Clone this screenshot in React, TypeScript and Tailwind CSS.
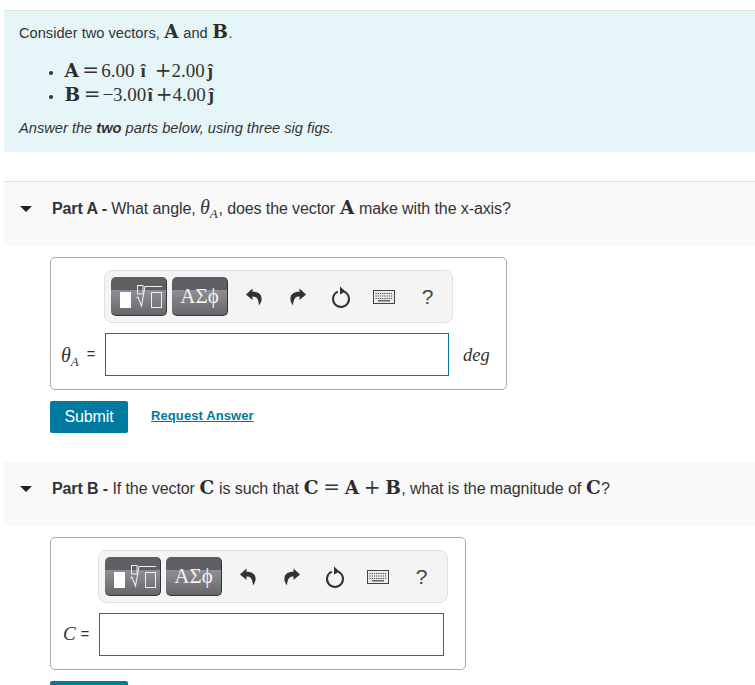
import type { ReactNode } from 'react';

const serif = "font-['Liberation_Serif',serif]";
const dejavu = "font-['DejaVu_Serif',serif]";

const Bold = ({ children }: { children: ReactNode }) => (
  <span className={`${dejavu} font-bold text-[18.500px] leading-none mx-[0.5px] text-[#2d2d2d]`}>{children}</span>
);

const Op = ({ children, className = '' }: { children: ReactNode; className?: string }) => (
  <span className={`${dejavu} text-[20px] leading-none ${className}`}>{children}</span>
);

const Theta = () => (
  <span className={`${serif} italic text-[20px] leading-none whitespace-nowrap`}>
    θ<sub className="text-[13px] leading-none bottom-[-4px] mr-[1px]">A</sub>
  </span>
);

const Caret = () => (
  <svg width="12" height="6" viewBox="0 0 12 6" className="shrink-0">
    <path d="M0 0h12L6 6z" fill="#222" />
  </svg>
);

const UndoIcon = () => (
  <svg width="16" height="18" viewBox="0 0 16 18">
    <path d="M6.500.5 0 6.500 6.500 12V8.500C10 8.500 12.500 10 13 17.500 15 15 16 12 15.500 9.500 14.800 5.500 11 3.800 6.500 3.800z" fill="#333" />
  </svg>
);

const RedoIcon = () => (
  <svg width="16" height="18" viewBox="0 0 16 18" className="-scale-x-100">
    <path d="M6.500.5 0 6.500 6.500 12V8.500C10 8.500 12.500 10 13 17.500 15 15 16 12 15.500 9.500 14.800 5.500 11 3.800 6.500 3.800z" fill="#333" />
  </svg>
);

const ReloadIcon = () => (
  <svg width="20" height="22" viewBox="0 0 20 22" fill="none">
    <path d="M6.800 5.600a8 8 0 1 0 6.400 0" stroke="#333" strokeWidth="2" />
    <path d="M9 .5l5.500 5L9 8.500z" fill="#333" />
  </svg>
);

const KeyboardIcon = () => (
  <svg width="22" height="14" viewBox="0 0 22 14">
    <rect x="0.500" y="0.500" width="21" height="13" fill="#ececec" stroke="#444" />
    <path d="M2.500 3.500h17M2.500 6h17M2.500 8.500h17" stroke="#444" strokeDasharray="1.200 1" />
    <path d="M5 10.800h12" stroke="#444" strokeWidth="1.200" />
  </svg>
);

const ToolButton = ({ children }: { children: ReactNode }) => (
  <div className="w-[56px] h-[39px] rounded-[5px] border-b border-r border-[#333] bg-[linear-gradient(#5f5f63_0,#5f5f63_35%,#8e8e94_35%,#66666a_100%)] flex items-center justify-center shrink-0 overflow-hidden">
    {children}
  </div>
);

const Toolbar = ({ className }: { className: string }) => (
  <div className={`h-[53px] bg-[#f4f4f4] border border-[#e2e2e2] rounded-lg flex items-center pl-[6px] ${className}`}>
    <div className="flex gap-[5px]">
      <ToolButton>
        <svg width="56" height="39" viewBox="0 0 56 39" fill="none" className="shrink-0">
          <rect x="9" y="15" width="11" height="16" fill="#fff" />
          <rect x="26.500" y="8.500" width="5.500" height="8.500" stroke="#eee" />
          <path d="M25.500 21l1.500-1 3.500 9L34 9.500h17" stroke="#eee" strokeWidth="1.100" />
          <rect x="40.500" y="15.500" width="10" height="15" stroke="#eee" />
        </svg>
      </ToolButton>
      <ToolButton>
        <span className={`${serif} text-[#f2f2f2] text-[21px] leading-none`}>ΑΣϕ</span>
      </ToolButton>
    </div>
    <div className="flex items-center ml-[4px]">
      <div className="w-[44px] flex justify-center"><UndoIcon /></div>
      <div className="w-[43px] flex justify-center"><RedoIcon /></div>
      <div className="w-[44px] flex justify-center"><ReloadIcon /></div>
      <div className="w-[42px] flex justify-center"><KeyboardIcon /></div>
      <div className="w-[45px] flex justify-center text-[21px] leading-none text-[#444]">?</div>
    </div>
  </div>
);

const PartHeader = ({ children, border, className }: { children: ReactNode; border?: boolean; className: string }) => (
  <div className={`bg-[#f9f9f9] flex items-start pl-[16px] ${border ? 'border-t border-[#e0e0e0]' : ''} ${className}`}>
    <div className="w-[32px] pt-[24px]"><Caret /></div>
    <p className="text-[16px] leading-[24px] pt-[15px] tracking-[-0.1px] whitespace-nowrap">{children}</p>
  </div>
);

export default function App() {
  return (
    <div className="h-[685px] overflow-hidden bg-white pl-[4px] pt-[10px] text-[#333] font-['Liberation_Sans',Arial,sans-serif]">
      {/* intro */}
      <section className="h-[142px] bg-[#e6f6f8] border-t border-[#e0e0e0] pl-[15px] pt-[10px] text-[14.650px]">
        <p className="leading-[24px]">
          Consider two vectors, <Bold>A</Bold> and <Bold>B</Bold>.
        </p>
        <ul className={`${serif} mt-[14px] ml-[29px] list-disc marker:text-[14px] text-[19px] leading-[24px]`}>
          <li className="ml-[16px] h-[24px] whitespace-nowrap">
            <Bold>A</Bold>
            <Op className="ml-[3px]">=</Op>
            <span className="ml-[2px]">6.00</span>
            <span className="ml-[6px] font-bold">î</span>
            <Op className="ml-[9px]">+</Op>
            <span>2.00</span>
            <span className="ml-[2px] font-bold">ĵ</span>
          </li>
          <li className="ml-[16px] h-[24px] whitespace-nowrap">
            <Bold>B</Bold>
            <Op className="ml-[3px]">=</Op>
            <span className="ml-[2px]">−3.00</span>
            <span className="ml-[1px] font-bold">î</span>
            <Op className="ml-[3px]">+</Op>
            <span>4.00</span>
            <span className="ml-[2px] font-bold">ĵ</span>
          </li>
        </ul>
        <p className="mt-[11px] italic leading-[20px]">
          Answer the <b>two</b> parts below, using three sig figs.
        </p>
      </section>

      {/* part A */}
      <PartHeader border className="mt-[29px] h-[65px]">
        <b>Part A - </b>What angle, <Theta />, does the vector <Bold>A</Bold> make with the x-axis?
      </PartHeader>
      <div className="ml-[46px] mt-[11px] w-[457px] h-[133px] border border-[#aaa] rounded-[5px] pt-[12px]">
        <Toolbar className="ml-[53px] w-[349px]" />
        <div className="flex items-center mt-[10px] h-[43px]">
          <div className="w-[54px] pl-[10px] flex items-center gap-[7px] shrink-0 text-[14.500px]">
            <Theta />
            <span>=</span>
          </div>
          <div className="w-[344px] h-[43px] border border-[#007a9e] bg-white shrink-0" />
          <span className={`${serif} italic text-[18.500px] ml-[14px] pt-[2px]`}>deg</span>
        </div>
      </div>
      <div className="ml-[46px] mt-[11px] flex items-center">
        <button className="w-[78px] h-[32px] bg-[#007a9e] rounded-[2px] text-white text-[16px] tracking-[-0.1px]">Submit</button>
        <a className="ml-[23px] text-[13px] font-bold underline text-[#007a9e] tracking-[0.1px] mb-[2px]">Request Answer</a>
      </div>

      {/* part B */}
      <PartHeader className="mt-[29px] h-[64px]">
        <b>Part B - </b>If the vector <Bold>C</Bold> is such that <Bold>C</Bold> <Op>=</Op> <Bold>A</Bold> <Op>+</Op> <Bold>B</Bold>, what is the magnitude of <Bold>C</Bold>?
      </PartHeader>
      <div className="ml-[46px] mt-[11px] w-[416px] h-[133px] border border-[#aaa] rounded-[5px] pt-[12px]">
        <Toolbar className="ml-[47px] w-[350px]" />
        <div className="flex items-center mt-[10px] h-[43px]">
          <div className="w-[48px] pl-[12px] flex items-center gap-[5px] shrink-0 text-[14.500px]">
            <span className={`${serif} italic text-[19px]`}>C</span>
            <span>=</span>
          </div>
          <div className="w-[345px] h-[43px] border border-[#007a9e] bg-white shrink-0" />
        </div>
      </div>
      <div className="ml-[46px] mt-[11px] w-[78px] h-[32px] bg-[#007a9e] rounded-[2px]" />
    </div>
  );
}
